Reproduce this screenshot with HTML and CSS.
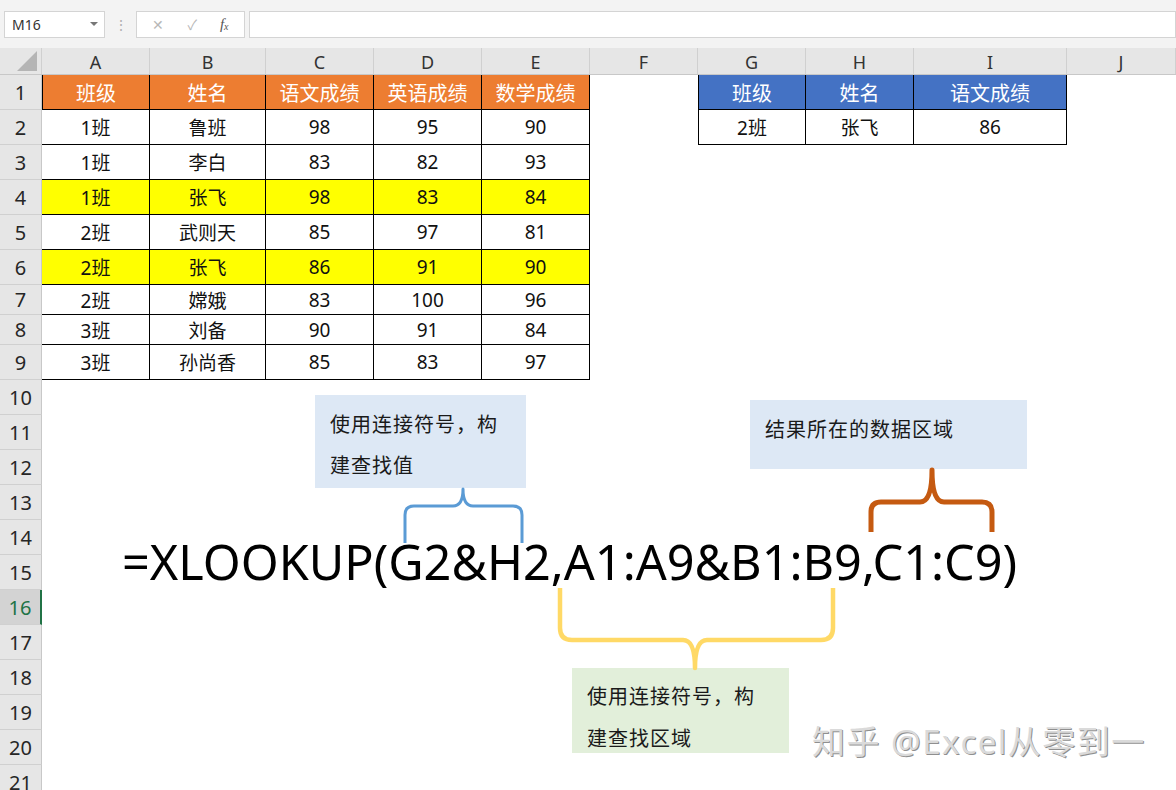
FILE: index.html
```html
<!DOCTYPE html>
<html lang="zh-CN">
<head>
<meta charset="utf-8">
<title>XLOOKUP</title>
<link rel="stylesheet" href="styles.css">
</head>
<body>
<div class="app">
  <div class="topbar">
    <div class="namebox"><span>M16</span><span class="caret"></span></div>
    <div class="dots">⋮</div>
    <div class="fxbox">
      <span class="ico x">✕</span>
      <span class="ico ok">✓</span>
      <span class="ico fx"><i>f</i><sub>x</sub></span>
    </div>
    <div class="finput"></div>
  </div>

  <div class="row colhead">
    <div class="corner"><span class="tri"></span></div>
    <div class="ch">A</div><div class="ch">B</div><div class="ch">C</div><div class="ch">D</div><div class="ch">E</div>
    <div class="ch">F</div><div class="ch">G</div><div class="ch">H</div><div class="ch">I</div><div class="ch">J</div>
  </div>

  <div class="row">
    <div class="rh">1</div>
    <div class="c t org l">班级</div><div class="c t org">姓名</div><div class="c t org">语文成绩</div><div class="c t org">英语成绩</div><div class="c t org">数学成绩</div>
    <div class="c"></div>
    <div class="c t blu l">班级</div><div class="c t blu">姓名</div><div class="c t blu">语文成绩</div>
  </div>
  <div class="row">
    <div class="rh">2</div>
    <div class="c t">1班</div><div class="c t">鲁班</div><div class="c t">98</div><div class="c t">95</div><div class="c t">90</div>
    <div class="c"></div>
    <div class="c t l">2班</div><div class="c t">张飞</div><div class="c t">86</div>
  </div>
  <div class="row">
    <div class="rh">3</div>
    <div class="c t">1班</div><div class="c t">李白</div><div class="c t">83</div><div class="c t">82</div><div class="c t">93</div>
  </div>
  <div class="row">
    <div class="rh">4</div>
    <div class="c t yel">1班</div><div class="c t yel">张飞</div><div class="c t yel">98</div><div class="c t yel">83</div><div class="c t yel">84</div>
  </div>
  <div class="row">
    <div class="rh">5</div>
    <div class="c t">2班</div><div class="c t">武则天</div><div class="c t">85</div><div class="c t">97</div><div class="c t">81</div>
  </div>
  <div class="row">
    <div class="rh">6</div>
    <div class="c t yel">2班</div><div class="c t yel">张飞</div><div class="c t yel">86</div><div class="c t yel">91</div><div class="c t yel">90</div>
  </div>
  <div class="row short">
    <div class="rh">7</div>
    <div class="c t">2班</div><div class="c t">嫦娥</div><div class="c t">83</div><div class="c t">100</div><div class="c t">96</div>
  </div>
  <div class="row short">
    <div class="rh">8</div>
    <div class="c t">3班</div><div class="c t">刘备</div><div class="c t">90</div><div class="c t">91</div><div class="c t">84</div>
  </div>
  <div class="row">
    <div class="rh">9</div>
    <div class="c t">3班</div><div class="c t">孙尚香</div><div class="c t">85</div><div class="c t">83</div><div class="c t">97</div>
  </div>
  <div class="row"><div class="rh">10</div></div>
  <div class="row"><div class="rh">11</div></div>
  <div class="row"><div class="rh">12</div></div>
  <div class="row"><div class="rh">13</div></div>
  <div class="row"><div class="rh">14</div></div>
  <div class="row"><div class="rh">15</div></div>
  <div class="row"><div class="rh sel">16</div></div>
  <div class="row"><div class="rh">17</div></div>
  <div class="row"><div class="rh">18</div></div>
  <div class="row"><div class="rh">19</div></div>
  <div class="row"><div class="rh">20</div></div>
  <div class="row"><div class="rh">21</div></div>

  <div class="note n1">使用连接符号，构<br>建查找值</div>
  <div class="note n2">结果所在的数据区域</div>
  <div class="note n3">使用连接符号，构<br>建查找区域</div>

  <svg class="braces" width="1176" height="790" viewBox="0 0 1176 790">
    <path class="br-blue" d="M405,543 L405,515 Q405,506 414,506 L453,506 Q463,506 463,489 Q463,506 473,506 L513,506 Q522,506 522,515 L522,543"/>
    <path class="br-orange" d="M871,532 L871,512 Q871,502 881,502 L920,502 Q932,502 932,470 Q932,502 944,502 L982,502 Q992,502 992,512 L992,532"/>
    <path class="br-yellow" d="M560,588 L560,628 Q560,640 572,640 L683,640 Q695,640 695,668 Q695,640 707,640 L821,640 Q833,640 833,628 L833,588"/>
  </svg>

  <div class="formula">=XLOOKUP(G2&amp;H2,A1:A9&amp;B1:B9,C1:C9)</div>
  <div class="watermark">知乎 @Excel从零到一</div>
</div>
</body>
</html>
```

FILE: styles.css
```css
html, body {
  margin: 0;
  padding: 0;
  background: #fff;
}
.app {
  position: relative;
  width: 1176px;
  height: 790px;
  overflow: hidden;
  font-family: "Noto Sans", "Noto Sans CJK SC", sans-serif;
  color: #111;
}

/* formula bar */
.topbar {
  height: 48px;
  background: #f3f3f3;
  display: flex;
  align-items: center;
  padding-left: 4px;
  box-sizing: border-box;
}
.namebox {
  width: 101px;
  height: 27px;
  box-sizing: border-box;
  background: #fff;
  border: 1px solid #d4d4d4;
  display: flex;
  align-items: center;
  justify-content: space-between;
  padding: 0 6px 0 7px;
  font-size: 14px;
  color: #333;
}
.caret {
  width: 0;
  height: 0;
  border-left: 4px solid transparent;
  border-right: 4px solid transparent;
  border-top: 4px solid #777;
}
.dots {
  width: 31px;
  text-align: center;
  color: #b0b0b0;
  font-size: 14px;
}
.fxbox {
  width: 109px;
  height: 27px;
  box-sizing: border-box;
  background: #fff;
  border: 1px solid #d4d4d4;
  display: flex;
  align-items: center;
  justify-content: space-around;
  padding: 0 4px;
  color: #b8b8b8;
  font-size: 14px;
}
.ico.fx {
  color: #555;
  font-family: "Liberation Serif", serif;
  font-size: 15px;
}
.ico.fx sub { font-size: 10px; font-style: italic; vertical-align: -1px; }
.finput {
  flex: 1;
  height: 27px;
  margin-left: 4px;
  background: #fff;
  border: 1px solid #d4d4d4;
  box-sizing: border-box;
}

/* grid */
.row {
  display: grid;
  grid-template-columns: 42px 108px 116px 108px 108px 108px 108px 108px 108px 153px 109px;
  height: 35px;
}
.row.short { height: 30px; }
.colhead {
  height: 27px;
  background: #e6e6e6;
  border-bottom: 1px solid #c8c8c8;
  box-sizing: border-box;
}
.corner {
  position: relative;
  border-right: 1px solid #d0d0d0;
}
.tri {
  position: absolute;
  right: 4px;
  bottom: 3px;
  width: 0;
  height: 0;
  border-left: 20px solid transparent;
  border-bottom: 20px solid #b5b5b5;
}
.ch {
  border-right: 1px solid #d0d0d0;
  display: flex;
  align-items: flex-end;
  justify-content: center;
  font-size: 18px;
  color: #333;
  line-height: 24px;
}
.rh {
  background: #e6e6e6;
  border-bottom: 1px solid #d0d0d0;
  border-right: 1px solid #c8c8c8;
  box-sizing: border-box;
  display: flex;
  align-items: center;
  justify-content: center;
  font-size: 20px;
  color: #262626;
}
.rh.sel {
  background: #d3d3d3;
  color: #217346;
  border-right: 2px solid #217346;
}
.c {
  box-sizing: border-box;
  display: flex;
  align-items: center;
  justify-content: center;
  font-size: 19px;
}
.c.t {
  border-right: 1px solid #000;
  border-bottom: 1px solid #000;
}
.c.l { border-left: 1px solid #000; }
.c.org { background: #ed7d31; color: #fff; font-size: 20px; }
.c.blu { background: #4472c4; color: #fff; font-size: 20px; }
.c.yel { background: #ffff00; }

/* callouts */
.note {
  position: absolute;
  box-sizing: border-box;
  font-size: 20px;
  line-height: 41px;
  color: #1a1a1a;
  padding: 9px 0 0 15px;
  letter-spacing: 1px;
}
.n1 { left: 315px; top: 395px; width: 211px; height: 93px; background: #dde8f5; }
.n2 { left: 750px; top: 400px; width: 277px; height: 69px; background: #dde8f5; }
.n3 { left: 572px; top: 668px; width: 217px; height: 85px; background: #e2efda; padding-top: 8px; line-height: 42px; }

.braces {
  position: absolute;
  left: 0;
  top: 0;
  pointer-events: none;
}
.braces path { fill: none; stroke-linecap: butt; stroke-linejoin: round; }
.br-blue { stroke: #5b9bd5; stroke-width: 3; }
.br-orange { stroke: #c55a11; stroke-width: 5; }
.br-yellow { stroke: #ffd966; stroke-width: 4.5; }

.formula {
  position: absolute;
  left: 122px;
  top: 537px;
  font-size: 48.6px;
  line-height: 1;
  white-space: nowrap;
  color: #000;
}
.watermark {
  position: absolute;
  left: 812px;
  top: 720px;
  font-size: 33px;
  line-height: 44px;
  white-space: nowrap;
  color: #dadada;
  text-shadow: 1px 1px 0 #8f8f8f;
  letter-spacing: 1.5px;
}
```
